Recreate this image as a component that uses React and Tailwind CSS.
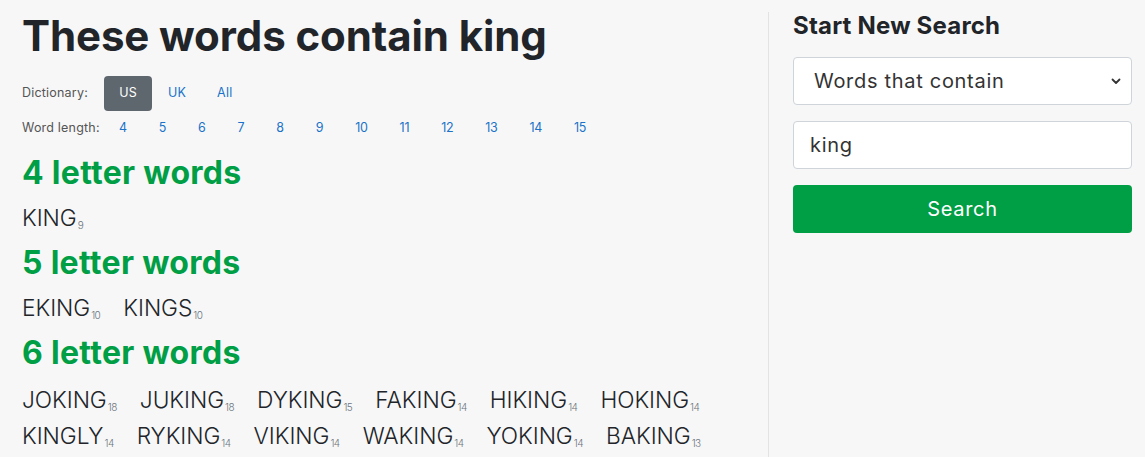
import React from 'react';

const font = { fontFamily: 'Inter, "Open Sans", sans-serif' };

const lengths = ['4', '5', '6', '7', '8', '9', '10', '11', '12', '13', '14', '15'];

const groups = [
    { title: '4 letter words', words: [['KING', 9]] },
    { title: '5 letter words', words: [['EKING', 10], ['KINGS', 10]] },
    {
        title: '6 letter words',
        words: [
            ['JOKING', 18], ['JUKING', 18], ['DYKING', 15], ['FAKING', 14], ['HIKING', 14], ['HOKING', 14],
            ['KINGLY', 14], ['RYKING', 14], ['VIKING', 14], ['WAKING', 14], ['YOKING', 14], ['BAKING', 13],
        ],
    },
];

const Word = ({ word, score }) => (
    <span className="whitespace-nowrap mr-[23px] text-[22.75px] font-light leading-[36px] text-[#212529] tracking-[-0.05px]">
        {word}
        <sub className="text-[10px] text-[#6c757d] align-baseline relative top-[3px] ml-[1px] tracking-[-0.5px]">{score}</sub>
    </span>
);

const App = () => {
    return (
        <div className="min-h-screen bg-[#f7f7f7] overflow-hidden" style={font}>
            <div className="flex">
                <div className="w-[768px] pl-[22px] pr-[16px] shrink-0">
                    <h1 className="text-[42px] font-bold text-[#212529] leading-[48px] pt-[12px] tracking-[-0.1px]">
                        These words contain king
                    </h1>
                    <div className="flex items-center mt-[16px] text-[12.5px] tracking-[0.2px]">
                        <span className="text-[#555] w-[82px]">Dictionary:</span>
                        <span className="bg-[#5f676e] text-white rounded-[4px] w-[48px] h-[35px] flex items-center justify-center">US</span>
                        <span className="text-[#1a73c9] ml-[16px]">UK</span>
                        <span className="text-[#1a73c9] ml-[31px]">All</span>
                    </div>
                    <div className="flex items-center mt-[6px] text-[12.5px] h-[22px]">
                        <span className="text-[#555] w-[97px] tracking-[0.2px]">Word length:</span>
                        {lengths.map((l) => (
                            <span key={l} className="text-[#1a73c9] mr-[32px] tracking-[-0.3px]">{l}</span>
                        ))}
                    </div>
                    {groups.map((g, gi) => (
                        <div key={g.title}>
                            <h3 className={`text-[32px] font-bold text-[#009e45] leading-[40px] tracking-[0.3px] ${gi === 0 ? 'mt-[14px]' : 'mt-[7px]'}`}>
                                {g.title}
                            </h3>
                            <div className={gi === 2 ? 'mt-[9px]' : 'mt-[7px]'}>
                                {g.words.map(([w, s], i) => (
                                    <React.Fragment key={w}>
                                        <Word word={w} score={s} />
                                        {i === 5 && <br />}
                                    </React.Fragment>
                                ))}
                            </div>
                        </div>
                    ))}
                </div>
                <div className="flex-1 mt-[12px] border-l border-[#e3e3e3] pl-[24px] pr-[13px] min-h-[445px]">
                    <h4 className="text-[24px] font-bold text-[#212529] leading-[28px] tracking-[0.2px]">Start New Search</h4>
                    <div className="mt-[17px] h-[48px] bg-white border border-[#ced4da] rounded-[4px] flex items-center justify-between pl-[20px] pr-[10px] text-[20px] tracking-[0.7px] text-[#333]">
                        <span>Words that contain</span>
                        <svg width="10" height="7" viewBox="0 0 10 7" fill="none">
                            <path d="M1.5 1.5L5 5L8.5 1.5" stroke="#333" strokeWidth="1.8" strokeLinecap="round" strokeLinejoin="round" />
                        </svg>
                    </div>
                    <div className="mt-[16px] h-[48px] bg-white border border-[#ced4da] rounded-[4px] flex items-center pl-[16px] text-[20px] tracking-[0.7px] text-[#333]">
                        king
                    </div>
                    <div className="mt-[16px] h-[48px] bg-[#009e45] rounded-[4px] flex items-center justify-center text-[20px] tracking-[0.7px] text-white">
                        Search
                    </div>
                </div>
            </div>
        </div>
    );
};

export default App;
